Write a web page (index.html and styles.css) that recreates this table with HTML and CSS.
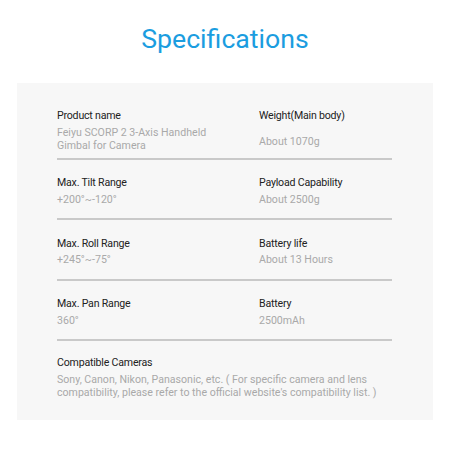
FILE: index.html
```html
<!DOCTYPE html>
<html>
<head>
<meta charset="utf-8">
<link rel="stylesheet" href="styles.css">
</head>
<body>
<h1 class="title">Specifications</h1>
<section class="panel">
  <div class="row row-first">
    <div class="cell">
      <div class="label">Product name</div>
      <div class="value value-multi">Feiyu SCORP 2 3-Axis Handheld Gimbal for Camera</div>
    </div>
    <div class="cell cell-split">
      <div class="label">Weight(Main body)</div>
      <div class="value">About 1070g</div>
    </div>
  </div>
  <div class="row">
    <div class="cell">
      <div class="label">Max. Tilt Range</div>
      <div class="value">+200°~-120°</div>
    </div>
    <div class="cell">
      <div class="label">Payload Capability</div>
      <div class="value">About 2500g</div>
    </div>
  </div>
  <div class="row">
    <div class="cell">
      <div class="label">Max. Roll Range</div>
      <div class="value">+245°~-75°</div>
    </div>
    <div class="cell">
      <div class="label">Battery life</div>
      <div class="value">About 13 Hours</div>
    </div>
  </div>
  <div class="row">
    <div class="cell">
      <div class="label">Max. Pan Range</div>
      <div class="value">360°</div>
    </div>
    <div class="cell">
      <div class="label">Battery</div>
      <div class="value">2500mAh</div>
    </div>
  </div>
  <div class="row row-last">
    <div class="cell cell-wide">
      <div class="label">Compatible Cameras</div>
      <div class="value value-multi">Sony, Canon, Nikon, Panasonic, etc. ( For specific camera and lens compatibility, please refer to the official website's compatibility list. )</div>
    </div>
  </div>
</section>
</body>
</html>
```

FILE: styles.css
```css
* { box-sizing: border-box; }
html, body { margin: 0; padding: 0; background: #ffffff; }
body {
  font-family: Roboto, "Noto Sans", sans-serif;
  width: 450px;
}
.title {
  margin: 0;
  padding-top: 19px;
  height: 83px;
  text-align: center;
  font-size: 26.7px;
  font-weight: 400;
  line-height: 40px;
  color: #1b9de0;
}
.panel {
  margin: 0 17px;
  background: #f7f7f7;
  padding: 0 41px 21px 40px;
}
.row {
  display: grid;
  grid-template-columns: 202px 1fr;
  padding: 16.5px 0 11.5px;
  border-bottom: 2px solid #c9c9c9;
}
.row-first { padding-top: 26px; padding-bottom: 6px; }
.row-first .cell:first-child { padding-right: 30px; }
.row-last { border-bottom: none; padding-top: 15px; padding-bottom: 0; }
.cell { display: flex; flex-direction: column; }
.cell-split { justify-content: space-between; padding-bottom: 3px; }
.cell-wide { grid-column: 1 / -1; }
.label {
  font-size: 10.6px;
  letter-spacing: -0.2px;
  line-height: 14px;
  color: #222222;
}
.value {
  margin-top: 2.6px;
  font-size: 10.6px;
  line-height: 14px;
  color: #a9a9a9;
}
.value-multi { line-height: 13px; }
.row-last .value-multi { line-height: 12.5px; margin-top: 4px; }
```
